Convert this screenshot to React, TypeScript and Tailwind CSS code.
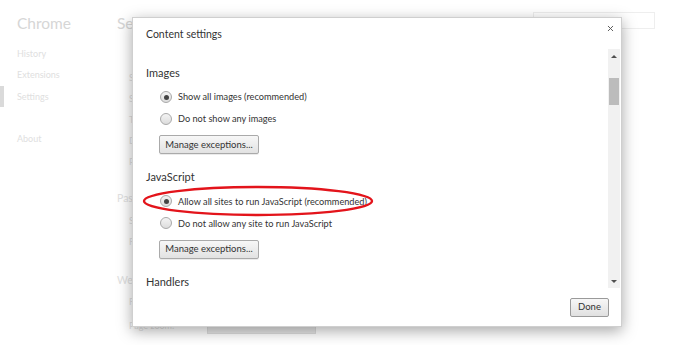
import React from 'react';
import { X } from 'lucide-react';

const font = "font-['Lato','Noto_Sans',sans-serif]";

function Radio({ checked, label }: { checked?: boolean; label: string }) {
  return (
    <div className="flex items-center h-[22px] pl-[14px]">
      <span className="w-[12px] h-[12px] rounded-full border border-[#a9a9a9] bg-gradient-to-b from-[#f4f4f4] to-[#dcdcdc] flex items-center justify-center">
        {checked && <span className="w-[5px] h-[5px] rounded-full bg-[#444]" />}
      </span>
      <span className="ml-[6px] text-[9.2px] text-[#333] leading-none whitespace-nowrap">{label}</span>
    </div>
  );
}

function ManageButton() {
  return (
    <button className="mt-[5px] ml-[13px] h-[19px] w-[100px] border border-[#aaa] rounded-[2px] bg-gradient-to-b from-[#f7f7f7] to-[#e2e2e2] text-[9.5px] text-[#333] leading-none whitespace-nowrap shadow-[0_1px_0_rgba(0,0,0,0.08)]">
      Manage exceptions...
    </button>
  );
}

function Section({ title, options, button = true }: { title: string; options: { label: string; checked?: boolean }[]; button?: boolean }) {
  return (
    <section className="mb-[15px]">
      <h3 className="text-[11px] text-[#333] leading-[16px] mb-[5px]">{title}</h3>
      {options.map((o) => (
        <Radio key={o.label} label={o.label} checked={o.checked} />
      ))}
      {button && <ManageButton />}
    </section>
  );
}

export default function App() {
  return (
    <div className={`relative w-[677px] h-[345px] overflow-hidden bg-white ${font}`}>
      {/* background settings page, washed out */}
      <div className="flex text-[#e0e0e0]">
        <aside className="w-[117px] pt-[13px]">
          <div className="pl-[17px] text-[15.5px] leading-[20px] text-[#d6d6d6]">Chrome</div>
          <nav className="mt-[10px] text-[9px]">
            <div className="pl-[17px] h-[21px] leading-[21px]">History</div>
            <div className="pl-[17px] h-[22px] leading-[22px]">Extensions</div>
            <div className="relative pl-[17px] h-[22px] leading-[22px]">
              <span className="absolute left-0 top-0 w-[4px] h-[21px] bg-[#dadada]" />
              Settings
            </div>
            <div className="pl-[17px] h-[21px] leading-[21px] mt-[20px]">About</div>
          </nav>
        </aside>
        <main className="flex-1 pt-[13px]">
          <div className="flex items-center">
            <div className="text-[15.5px] leading-[20px] text-[#d6d6d6]">Settings</div>
            <div className="ml-auto mr-[22px] mt-[-6px] w-[122px] h-[17px] border border-[#eeeeee]" />
          </div>
          <div className="pl-[12px] text-[9px] leading-[21px] mt-[34px]">
            <div>Sign in</div>
            <div>Search</div>
            <div>Theme</div>
            <div>Default</div>
            <div>Privacy</div>
          </div>
          <div className="mt-[18px] text-[10.5px] leading-[16px]">Passwords and forms</div>
          <div className="pl-[12px] text-[9px] leading-[21px] mt-[4px]">
            <div>Saving</div>
            <div>Forms</div>
          </div>
          <div className="mt-[20px] text-[10.5px] leading-[16px]">Web content</div>
          <div className="pl-[12px] text-[9px] leading-[24px] mt-[2px]">
            <div>Font size:</div>
            <div className="flex items-center">
              Page zoom:
              <span className="ml-[33px] w-[109px] h-[16px] bg-[#e8e8e8] border border-[#dedede]" />
            </div>
          </div>
        </main>
      </div>

      {/* dialog */}
      <div className="absolute left-[132px] top-[17px] w-[490px] h-[310px] bg-white border border-[#cfcfcf] shadow-[0_4px_14px_rgba(0,0,0,0.35)] flex flex-col">
        <header className="h-[31px] flex items-start pl-[13px] pr-[6px] pt-[9px]">
          <h2 className="text-[10.5px] text-[#333] leading-[14px]">Content settings</h2>
          <X className="ml-auto mt-[-3px] text-[#555]" size={9} strokeWidth={2.5} />
        </header>
        <div className="flex flex-1 min-h-0">
          <div className="flex-1 overflow-hidden pl-[13px] pt-[16px]">
            <Section
              title="Images"
              options={[
                { label: 'Show all images (recommended)', checked: true },
                { label: 'Do not show any images' },
              ]}
            />
            <Section
              title="JavaScript"
              options={[
                { label: 'Allow all sites to run JavaScript (recommended)', checked: true },
                { label: 'Do not allow any site to run JavaScript' },
              ]}
            />
            <Section title="Handlers" options={[]} button={false} />
          </div>
          <div className="w-[12px] mr-[1px] bg-[#f1f1f1] flex flex-col items-center">
            <div className="h-[14px] flex items-center justify-center">
              <span className="w-0 h-0 border-l-[3px] border-r-[3px] border-b-[3px] border-l-transparent border-r-transparent border-b-[#505050]" />
            </div>
            <div className="mt-[15px] w-[10px] h-[27px] bg-[#bcbcbc]" />
            <div className="mt-auto h-[14px] flex items-center justify-center">
              <span className="w-0 h-0 border-l-[3px] border-r-[3px] border-t-[3px] border-l-transparent border-r-transparent border-t-[#505050]" />
            </div>
          </div>
        </div>
        <footer className="h-[38px] flex items-center justify-end pr-[12px]">
          <button className="w-[39px] h-[19px] border border-[#9a9a9a] rounded-[2px] bg-gradient-to-b from-[#f7f7f7] to-[#e0e0e0] text-[9.5px] text-[#333] leading-none">
            Done
          </button>
        </footer>
      </div>

      {/* red annotation ellipse */}
      <svg className="absolute left-0 top-0 pointer-events-none" width="677" height="345">
        <ellipse cx="258" cy="201" rx="114" ry="14" fill="none" stroke="#e3141b" strokeWidth="2.4" />
      </svg>
    </div>
  );
}
